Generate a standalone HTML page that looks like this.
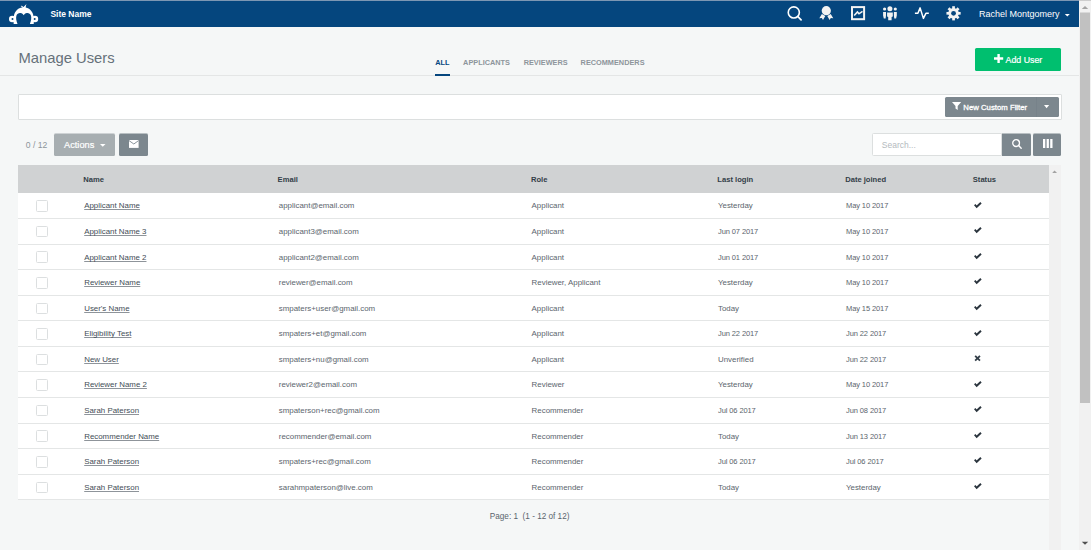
<!DOCTYPE html>
<html lang="en">
<head>
<meta charset="utf-8">
<title>Manage Users</title>
<style>
*{box-sizing:border-box;margin:0;padding:0}
html,body{width:1091px;height:550px;overflow:hidden;background:#f5f7f7;font-family:"Liberation Sans",sans-serif;color:#333e48}
.abs{position:absolute}
svg{position:absolute;overflow:visible}
#nav{left:0;top:0;width:1079px;height:27px;background:#05467e}
#navtop{left:0;top:0;width:1079px;height:1px;background:#7d97b3}
#nav .site{left:50.4px;top:9.5px;font-size:8.5px;color:#fff;font-weight:bold;line-height:1;white-space:nowrap}
#nav .user{left:979px;top:9.6px;font-size:9px;color:#fff;line-height:1;white-space:nowrap}
#sb{left:1079px;top:0;width:12px;height:550px;background:#f1f1f1}
#sb .thumb{left:1px;top:13px;width:10px;height:390px;background:#c1c1c1;box-shadow:0 -1px 0 rgba(193,193,193,.5)}
h1{left:18.4px;top:50.5px;font-size:14.8px;font-weight:normal;color:#66717a;line-height:1;white-space:nowrap}
#hline{left:0;top:75px;width:1079px;height:1px;background:#e4e6e6}
.tabs{top:58.7px;font-size:7.33px;font-weight:bold;color:#8d959b;line-height:1;white-space:nowrap}
#allu{left:435px;top:73.7px;width:14.5px;height:2px;background:#05467e}
#add{left:975px;top:48px;width:86px;height:22.8px;background:#00bf6f;border-radius:1.5px}
#add span{position:absolute;left:30.6px;top:7.7px;color:#fff;font-size:8.8px;line-height:1;white-space:nowrap;-webkit-text-stroke:0.2px #fff}
#fbox{left:18px;top:94px;width:1043.5px;height:25.5px;background:#fff;border:1px solid #dcdfdf;border-radius:1px}
#ncf{left:945.4px;top:97.2px;width:113.3px;height:19.8px;background:#7c878e;border-radius:1.5px}
#ncf span{position:absolute;left:17.9px;top:6.6px;color:#fff;font-size:7.78px;line-height:1;white-space:nowrap;-webkit-text-stroke:0.3px #fff}
#ncf i{position:absolute;left:90.5px;top:0;width:1px;height:100%;background:#77828a}
#cnt{left:25.8px;top:140.6px;font-size:8.6px;line-height:1;color:#8d959b;white-space:nowrap}
#act{left:54px;top:134px;width:60.8px;height:22px;background:#a7aeb1;border-radius:1.5px;box-shadow:0 -1px 0 rgba(167,174,177,.5)}
#act span{position:absolute;left:10.1px;top:7.2px;color:#fff;font-size:9.2px;line-height:1;white-space:nowrap;-webkit-text-stroke:0.2px #fff}
#mail{left:119.3px;top:134px;width:28.6px;height:22px;background:#7c878e;border-radius:1.5px;box-shadow:0 -1px 0 rgba(124,135,142,.5)}
#search{left:872.4px;top:133px;width:130px;height:23px;background:#fff;border:1px solid #dcdfdf;border-radius:1.5px 0 0 1.5px}
#search span{position:absolute;left:8.4px;top:6.5px;font-size:8.5px;line-height:1;color:#b4babe;white-space:nowrap}
#sbtn{left:1002.1px;top:134px;width:28.7px;height:22px;background:#7c878e;border-radius:0 1.5px 1.5px 0;box-shadow:0 -1px 0 rgba(124,135,142,.5)}
#cbtn{left:1033.1px;top:134px;width:28.2px;height:22px;background:#7c878e;border-radius:1.5px;box-shadow:0 -1px 0 rgba(124,135,142,.5)}
#track{left:1049px;top:165px;width:12.2px;height:385px;background:#f1f1f1}
#thead{left:18px;top:165px;width:1031px;height:27.8px;background:#d0d2d3;font-size:7.6px;font-weight:bold;color:#333e48}
#thead span{position:absolute;top:10.6px;line-height:1;white-space:nowrap}
#rows{left:18px;top:193.45px;width:1031px;height:306px}
.r{position:absolute;left:0;width:1031px;height:25.5px;background:#fff;font-size:7.9px;color:#5b656d}
.r:after{content:"";position:absolute;left:0;bottom:0;width:100%;height:1px;background:#e4e6e6}
.r span{position:absolute;top:8.7px;line-height:1;white-space:nowrap}
.r .cb{left:18.2px;top:6.9px;width:11.7px;height:11.6px;border:1px solid #dcdfe0;border-radius:1.5px;background:#fff}
.r .n{left:66.2px;font-size:7.9px;text-decoration:underline;text-decoration-thickness:0.7px;text-decoration-skip-ink:none;text-underline-offset:1.3px;text-decoration-color:rgba(67,77,86,.6);color:#434d56}
.r .e{left:260.8px}
.r .ro{left:513.6px}
.r .l{left:700px}
.r .d{left:828px}
.r .dg{font-size:7.5px;letter-spacing:-0.1px}
.r .s{left:955.3px}
#pg{left:489.8px;top:512.5px;font-size:8.2px;line-height:1;color:#5b656d;white-space:nowrap}
</style>
</head>
<body>
<div id="nav" class="abs">
  <svg style="left:9px;top:4px" width="29" height="20" viewBox="0 0 29 20">
    <path fill="#fff" d="M4.7 19.9 C4.4 17.5 4.4 15 4.7 13 C5.3 7.4 9.4 3.3 14.7 3.3 C20 3.3 24.1 7.4 24.7 13 C25 15 25 17.5 24.7 19.9 L20.9 19.9 C22.2 16.8 22.6 13.8 22 11.8 C21.4 9.5 19.5 8.8 17.9 9 C16.3 9.2 15.3 10.2 14.7 11.3 C14.1 10.2 13.1 9.2 11.5 9 C9.9 8.8 8 9.5 7.4 11.8 C6.8 13.8 7.2 16.8 8.5 19.9 Z"/>
    <circle cx="3.2" cy="15" r="3.2" fill="#fff"/><circle cx="26" cy="15" r="3.2" fill="#fff"/>
    <circle cx="3.5" cy="15" r="1" fill="#05467e"/><circle cx="25.7" cy="15" r="1" fill="#05467e"/>
    <path fill="#fff" d="M13.2 4 C14.6 3.2 16 1.8 17.4 0 C17 1.6 16.6 2.9 16.6 4.4 Z M14 3.9 L11.7 1.9 L12.9 1.7 L15 3.5 Z"/>
  </svg>
  <div class="abs site">Site Name</div>
  <svg style="left:786px;top:5px" width="17" height="17" viewBox="786 5 17 17"><circle cx="793.8" cy="12.45" r="5.55" fill="none" stroke="#fff" stroke-width="1.6"/><path d="M797.9 16.6 L801.1 19.8" stroke="#fff" stroke-width="1.7" stroke-linecap="round"/></svg>
  <svg style="left:818px;top:5px" width="17" height="17" viewBox="818 5 17 17"><circle cx="826.3" cy="10.65" r="4.6" fill="#f2f2f2"/><path fill="#f2f2f2" d="M821.9 14 L819.3 18.3 L821.8 17.9 L823 20.1 L825.3 15.9 Z M830.7 14 L833.3 18.3 L830.8 17.9 L829.6 20.1 L827.3 15.9 Z"/></svg>
  <svg style="left:850px;top:5px" width="17" height="17" viewBox="850 5 17 17"><rect x="852" y="7.1" width="12.1" height="12.1" fill="none" stroke="#f2f2f2" stroke-width="2"/><path d="M854.2 15.6 L857.4 11.9 L859 13.8 L862.5 11.4" fill="none" stroke="#f2f2f2" stroke-width="1.6"/></svg>
  <svg style="left:881px;top:5px" width="18" height="17" viewBox="881 5 18 17"><g fill="#f2f2f2"><circle cx="889.9" cy="8.7" r="2.5"/><path d="M887.1 12.4 H892.8 V16.5 L891.6 17 V20.3 H888.2 V17 L887.1 16.5 Z"/><circle cx="884.6" cy="9" r="1.6"/><circle cx="895.3" cy="9" r="1.6"/><path d="M883.1 11.9 H886 V15.5 L885.6 18.6 H883.8 L883.1 15.5 Z M893.9 11.9 H896.8 V15.5 L896.1 18.6 H894.3 L893.9 15.5 Z"/></g></svg>
  <svg style="left:913px;top:5px" width="18" height="17" viewBox="913 5 18 17"><path d="M914.9 13.3 H917.9 L920.1 7.9 L923.4 18.4 L925.9 13.3 H928.8" fill="none" stroke="#fff" stroke-width="1.5" stroke-linejoin="round"/></svg>
  <svg style="left:945px;top:5px" width="18" height="17" viewBox="-9 -8.5 18 17"><g transform="translate(-0.45,-0.2)"><circle r="3.8" fill="none" stroke="#f2f2f2" stroke-width="2.9"/><g fill="#f2f2f2"><rect x="-1.35" y="-7.1" width="2.7" height="14.2"/><rect x="-1.35" y="-7.1" width="2.7" height="14.2" transform="rotate(45)"/><rect x="-1.35" y="-7.1" width="2.7" height="14.2" transform="rotate(90)"/><rect x="-1.35" y="-7.1" width="2.7" height="14.2" transform="rotate(135)"/></g><circle r="2.4" fill="#05467e"/></g></svg>
  <div class="abs user">Rachel Montgomery</div>
  <svg style="left:1064px;top:13px" width="7" height="4" viewBox="0 0 7 4"><path d="M0.8 1 H5.8 L3.3 3.4 Z" fill="#fff"/></svg>
</div>
<div id="sb" class="abs"><div class="abs thumb"></div>
  <svg style="left:2px;top:4.7px" width="8" height="5" viewBox="0 0 8 5"><path d="M0.8 4 L4 1 L7.2 4 Z" fill="#a3a3a3"/></svg>
  <svg style="left:2px;top:541px" width="8" height="5" viewBox="0 0 8 5"><path d="M0.8 0.8 L4 3.8 L7.2 0.8 Z" fill="#505050"/></svg>
</div>
<div id="navtop" class="abs"></div><div class="abs" style="left:1079px;top:0;width:12px;height:1px;background:#cdcdcd"></div>
<h1 class="abs">Manage Users</h1>
<div id="hline" class="abs"></div>
<div class="abs tabs" style="left:435.2px;color:#05467e">ALL</div>
<div class="abs tabs" style="left:463.1px">APPLICANTS</div>
<div class="abs tabs" style="left:523.7px">REVIEWERS</div>
<div class="abs tabs" style="left:580.6px">RECOMMENDERS</div>
<div id="allu" class="abs"></div>
<div id="add" class="abs"><svg style="left:18.7px;top:6.1px" width="10" height="10" viewBox="0 0 10 10"><path d="M0 4.5 H9.2 M4.6 0 V9" stroke="#fff" stroke-width="2.4" fill="none"/></svg><span>Add User</span></div>
<div id="fbox" class="abs"></div>
<div id="ncf" class="abs"><svg style="left:7px;top:4.9px" width="10" height="9" viewBox="0 0 10 9"><path d="M0 0 H9.2 L5.7 3.9 V8 L3.5 6.6 V3.9 Z" fill="#fff"/></svg><span>New Custom Filter</span><i></i><svg style="left:99px;top:7.4px" width="6" height="4" viewBox="0 0 6 4"><path d="M0 0 H5.2 L2.6 3.2 Z" fill="#fff"/></svg></div>
<div id="cnt" class="abs">0 / 12</div>
<div id="act" class="abs"><span>Actions</span><svg style="left:45.6px;top:10.4px" width="6" height="4" viewBox="0 0 6 4"><path d="M0 0 H5.5 L2.75 2.8 Z" fill="#fff"/></svg></div>
<div id="mail" class="abs"><svg style="left:9.3px;top:5.9px" width="10" height="8" viewBox="0 0 10 8"><rect x="0" y="0" width="9.6" height="7.9" fill="#fff"/><path d="M0 0.6 L4.8 4 L9.6 0.6" fill="none" stroke="#7c878e" stroke-width="0.9"/></svg></div>
<div id="search" class="abs"><span>Search...</span></div>
<div id="sbtn" class="abs"><svg style="left:9.8px;top:5px" width="10" height="10" viewBox="0 0 10 10"><circle cx="4.1" cy="4.1" r="3.4" fill="none" stroke="#fff" stroke-width="1.3"/><path d="M6.6 6.6 L9.2 9.2" stroke="#fff" stroke-width="1.4" stroke-linecap="round"/></svg></div>
<div id="cbtn" class="abs"><svg style="left:9.8px;top:5px" width="10" height="9" viewBox="0 0 10 9"><path d="M0 0 H2.3 V8.9 H0 Z M3.6 0 H5.9 V8.9 H3.6 Z M7.2 0 H9.5 V8.9 H7.2 Z" fill="#fff"/></svg></div>
<div id="track" class="abs"><svg style="left:3.3px;top:4.9px" width="6" height="4" viewBox="0 0 6 4"><path d="M0.2 3 L2.6 0.4 L5 3 Z" fill="#a3a3a3"/></svg></div>
<div id="thead" class="abs">
  <span style="left:65.2px">Name</span><span style="left:259.6px">Email</span><span style="left:513px">Role</span><span style="left:699.3px">Last login</span><span style="left:827.2px">Date joined</span><span style="left:954.8px">Status</span>
</div>
<div id="rows" class="abs">
<div class="r" style="top:0.0px;height:25.57px"><span class="cb"></span><span class="n" style="top:8.55px">Applicant Name</span><span class="e" style="top:8.55px">applicant@email.com</span><span class="ro" style="top:8.55px">Applicant</span><span class="l" style="top:8.55px">Yesterday</span><span class="d dg" style="top:8.55px">May 10 2017</span><svg class="s" style="top:7.3px" width="10" height="8" viewBox="0 0 10 8"><path d="M1.7 3.7 L3.7 5.8 L8 1.7" fill="none" stroke="#2b353e" stroke-width="1.9"/></svg></div>
<div class="r" style="top:25.57px;height:25.57px"><span class="cb"></span><span class="n" style="top:8.98px">Applicant Name 3</span><span class="e" style="top:8.98px">applicant3@email.com</span><span class="ro" style="top:8.98px">Applicant</span><span class="l dg" style="top:8.98px">Jun 07 2017</span><span class="d dg" style="top:8.98px">May 10 2017</span><svg class="s" style="top:7.3px" width="10" height="8" viewBox="0 0 10 8"><path d="M1.7 3.7 L3.7 5.8 L8 1.7" fill="none" stroke="#2b353e" stroke-width="1.9"/></svg></div>
<div class="r" style="top:51.14px;height:25.57px"><span class="cb"></span><span class="n" style="top:9.41px">Applicant Name 2</span><span class="e" style="top:9.41px">applicant2@email.com</span><span class="ro" style="top:9.41px">Applicant</span><span class="l dg" style="top:9.41px">Jun 01 2017</span><span class="d dg" style="top:9.41px">May 10 2017</span><svg class="s" style="top:7.3px" width="10" height="8" viewBox="0 0 10 8"><path d="M1.7 3.7 L3.7 5.8 L8 1.7" fill="none" stroke="#2b353e" stroke-width="1.9"/></svg></div>
<div class="r" style="top:76.71px;height:25.57px"><span class="cb"></span><span class="n" style="top:8.84px">Reviewer Name</span><span class="e" style="top:8.84px">reviewer@email.com</span><span class="ro" style="top:8.84px">Reviewer, Applicant</span><span class="l" style="top:8.84px">Yesterday</span><span class="d dg" style="top:8.84px">May 10 2017</span><svg class="s" style="top:7.3px" width="10" height="8" viewBox="0 0 10 8"><path d="M1.7 3.7 L3.7 5.8 L8 1.7" fill="none" stroke="#2b353e" stroke-width="1.9"/></svg></div>
<div class="r" style="top:102.28px;height:25.57px"><span class="cb"></span><span class="n" style="top:9.27px">User's Name</span><span class="e" style="top:9.27px">smpaters+user@gmail.com</span><span class="ro" style="top:9.27px">Applicant</span><span class="l" style="top:9.27px">Today</span><span class="d dg" style="top:9.27px">May 15 2017</span><svg class="s" style="top:7.3px" width="10" height="8" viewBox="0 0 10 8"><path d="M1.7 3.7 L3.7 5.8 L8 1.7" fill="none" stroke="#2b353e" stroke-width="1.9"/></svg></div>
<div class="r" style="top:127.85px;height:25.57px"><span class="cb"></span><span class="n" style="top:8.7px">Eligibility Test</span><span class="e" style="top:8.7px">smpaters+et@gmail.com</span><span class="ro" style="top:8.7px">Applicant</span><span class="l dg" style="top:8.7px">Jun 22 2017</span><span class="d dg" style="top:8.7px">Jun 22 2017</span><svg class="s" style="top:7.3px" width="10" height="8" viewBox="0 0 10 8"><path d="M1.7 3.7 L3.7 5.8 L8 1.7" fill="none" stroke="#2b353e" stroke-width="1.9"/></svg></div>
<div class="r" style="top:153.42px;height:25.57px"><span class="cb"></span><span class="n" style="top:9.13px">New User</span><span class="e" style="top:9.13px">smpaters+nu@gmail.com</span><span class="ro" style="top:9.13px">Applicant</span><span class="l" style="top:9.13px">Unverified</span><span class="d dg" style="top:9.13px">Jun 22 2017</span><svg class="s" style="top:7.3px" width="10" height="8" viewBox="0 0 10 8"><path d="M2.15 1.9 L6.95 6.7 M6.95 1.9 L2.15 6.7" fill="none" stroke="#333e48" stroke-width="1.8"/></svg></div>
<div class="r" style="top:178.99px;height:25.57px"><span class="cb"></span><span class="n" style="top:8.56px">Reviewer Name 2</span><span class="e" style="top:8.56px">reviewer2@email.com</span><span class="ro" style="top:8.56px">Reviewer</span><span class="l" style="top:8.56px">Yesterday</span><span class="d dg" style="top:8.56px">May 10 2017</span><svg class="s" style="top:7.3px" width="10" height="8" viewBox="0 0 10 8"><path d="M1.7 3.7 L3.7 5.8 L8 1.7" fill="none" stroke="#2b353e" stroke-width="1.9"/></svg></div>
<div class="r" style="top:204.56px;height:25.57px"><span class="cb"></span><span class="n" style="top:8.99px">Sarah Paterson</span><span class="e" style="top:8.99px">smpaterson+rec@gmail.com</span><span class="ro" style="top:8.99px">Recommender</span><span class="l dg" style="top:8.99px">Jul 06 2017</span><span class="d dg" style="top:8.99px">Jun 08 2017</span><svg class="s" style="top:7.3px" width="10" height="8" viewBox="0 0 10 8"><path d="M1.7 3.7 L3.7 5.8 L8 1.7" fill="none" stroke="#2b353e" stroke-width="1.9"/></svg></div>
<div class="r" style="top:230.13px;height:25.57px"><span class="cb"></span><span class="n" style="top:9.42px">Recommender Name</span><span class="e" style="top:9.42px">recommender@email.com</span><span class="ro" style="top:9.42px">Recommender</span><span class="l" style="top:9.42px">Today</span><span class="d dg" style="top:9.42px">Jun 13 2017</span><svg class="s" style="top:7.3px" width="10" height="8" viewBox="0 0 10 8"><path d="M1.7 3.7 L3.7 5.8 L8 1.7" fill="none" stroke="#2b353e" stroke-width="1.9"/></svg></div>
<div class="r" style="top:255.7px;height:25.57px"><span class="cb"></span><span class="n" style="top:8.85px">Sarah Paterson</span><span class="e" style="top:8.85px">smpaters+rec@gmail.com</span><span class="ro" style="top:8.85px">Recommender</span><span class="l dg" style="top:8.85px">Jul 06 2017</span><span class="d dg" style="top:8.85px">Jul 06 2017</span><svg class="s" style="top:7.3px" width="10" height="8" viewBox="0 0 10 8"><path d="M1.7 3.7 L3.7 5.8 L8 1.7" fill="none" stroke="#2b353e" stroke-width="1.9"/></svg></div>
<div class="r" style="top:281.27px;height:25.57px"><span class="cb"></span><span class="n" style="top:9.28px">Sarah Paterson</span><span class="e" style="top:9.28px">sarahmpaterson@live.com</span><span class="ro" style="top:9.28px">Recommender</span><span class="l" style="top:9.28px">Today</span><span class="d" style="top:9.28px">Yesterday</span><svg class="s" style="top:7.3px" width="10" height="8" viewBox="0 0 10 8"><path d="M1.7 3.7 L3.7 5.8 L8 1.7" fill="none" stroke="#2b353e" stroke-width="1.9"/></svg></div>
</div>
<div id="pg" class="abs">Page: 1&nbsp; (1 - 12 of 12)</div>
</body>
</html>
